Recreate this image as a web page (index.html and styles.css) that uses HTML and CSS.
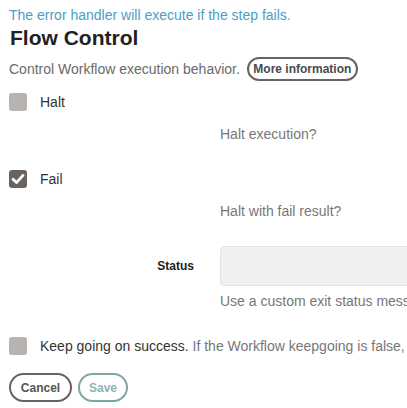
FILE: index.html
```html
<!DOCTYPE html>
<html>
<head>
<meta charset="utf-8">
<link rel="stylesheet" href="styles.css">
</head>
<body>
<div class="page">
  <p class="notice">The error handler will execute if the step fails.</p>
  <h2 class="title">Flow Control</h2>
  <div class="desc">
    <span>Control Workflow execution behavior.</span>
    <button class="pill info">More information</button>
  </div>

  <label class="check-row first">
    <span class="box"></span>
    <span class="label">Halt</span>
  </label>
  <div class="help help-a">Halt execution?</div>

  <label class="check-row fail">
    <span class="box checked">
      <svg viewBox="0 0 18 18" width="18" height="18"><path d="M4 9.2 L7.5 12.6 L14 5.4" fill="none" stroke="#fff" stroke-width="2.8" stroke-linecap="round" stroke-linejoin="round"/></svg>
    </span>
    <span class="label">Fail</span>
  </label>
  <div class="help help-a">Halt with fail result?</div>

  <div class="field">
    <div class="field-label">Status</div>
    <div class="input"></div>
  </div>
  <div class="help help-b">Use a custom exit status message when the step fails.</div>

  <label class="check-row keep">
    <span class="box"></span>
    <span class="label">Keep going on success. <span class="muted">If the Workflow keepgoing is false, only the error handler result is evaluated.</span></span>
  </label>

  <div class="actions">
    <button class="pill cancel">Cancel</button>
    <button class="pill save">Save</button>
  </div>
</div>
</body>
</html>
```

FILE: styles.css
```css
html, body {
  margin: 0;
  padding: 0;
  background: #fff;
  overflow: hidden;
}
body {
  width: 407px;
  height: 408px;
  font-family: "Liberation Sans", Arial, sans-serif;
  font-size: 14px;
  color: #333;
}
.page {
  padding: 5px 0 0 9px;
  white-space: nowrap;
}
.notice {
  margin: 0;
  line-height: 20px;
  color: #4aa0c6;
}
.title {
  margin: 0;
  font-size: 21px;
  line-height: 26px;
  font-weight: bold;
  color: #222;
  padding-left: 1px;
}
.desc {
  margin-top: 6px;
  height: 24px;
  display: flex;
  align-items: center;
  gap: 7px;
  color: #6a6a6a;
}
.pill {
  font-family: "Liberation Sans", Arial, sans-serif;
  font-weight: bold;
  font-size: 12px;
  background: #fff;
  border: 2px solid #6b625c;
  border-radius: 14px;
  padding: 0;
  margin: 0;
  box-sizing: border-box;
  display: inline-flex;
  align-items: center;
  justify-content: center;
}
.info {
  width: 111px;
  height: 24px;
  color: #4a4a4a;
}
.check-row {
  display: flex;
  align-items: center;
  gap: 13px;
  height: 18px;
}
.check-row.first { margin-top: 12px; }
.check-row.fail { margin-top: 26px; }
.check-row.keep { margin-top: 26px; }
.box {
  width: 18px;
  height: 18px;
  flex: none;
  border-radius: 3px;
  background: #b7b3b0;
  display: block;
}
.box.checked {
  background: #6b635d;
}
.box svg { display: block; }
.label {
  color: #333;
}
.muted {
  color: #777;
}
.help {
  line-height: 20px;
  color: #777;
  padding-left: 211px;
}
.help-a { margin-top: 13px; }
.help-b { margin-top: 5px; }
.field {
  margin-top: 25px;
  display: grid;
  grid-template-columns: 185px 400px;
  column-gap: 26px;
  align-items: center;
}
.field-label {
  text-align: right;
  font-size: 12px;
  font-weight: bold;
  color: #222;
}
.input {
  height: 40px;
  box-sizing: border-box;
  background: #f1f0ee;
  border: 1px solid #e6e4e1;
  border-radius: 4px;
}
.actions {
  margin-top: 18px;
  display: flex;
  gap: 6px;
}
.cancel {
  width: 63px;
  height: 29px;
  border-radius: 15px;
  color: #555;
}
.save {
  width: 50px;
  height: 29px;
  border-radius: 15px;
  border-color: #7fa6a6;
  color: #8fb2b3;
}
```
